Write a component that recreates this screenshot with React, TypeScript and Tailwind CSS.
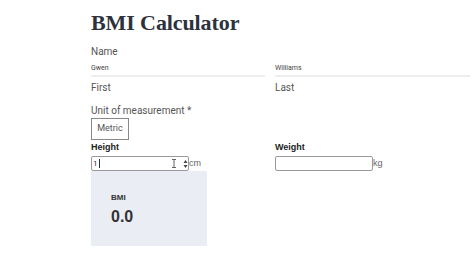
import React from "react";

export default function App() {
  return (
    <div className="w-[474px] h-[255px] bg-white overflow-hidden font-['Roboto','Liberation_Sans',sans-serif] text-[#444]">
      <div className="pl-[91px] pr-[4px] pt-[9px]">
        <h1 className="font-['Liberation_Serif',serif] font-bold text-[22px] leading-[28px] tracking-[-0.1px] text-[#2e323d]">
          BMI Calculator
        </h1>
        <div className="mt-[8px] text-[10px] leading-[14px] text-[#555]">Name</div>
        <div className="grid grid-cols-[174px_195px] gap-x-[10px] mt-[2px]">
          <div>
            <div className="text-[7px] leading-[10px] text-[#444] border-b-2 border-[#eeeeee] pb-[2px] pt-[2px]">Gwen</div>
            <div className="text-[10px] leading-[14px] text-[#555] mt-[4px]">First</div>
          </div>
          <div>
            <div className="text-[7px] leading-[10px] text-[#444] border-b-2 border-[#eeeeee] pb-[2px] pt-[2px]">Williams</div>
            <div className="text-[10px] leading-[14px] text-[#555] mt-[4px]">Last</div>
          </div>
        </div>
        <div className="mt-[9px] text-[10px] leading-[14px] text-[#555]">Unit of measurement *</div>
        <div className="mt-0 w-[38px] h-[22px] border border-[#888] flex items-center justify-center text-[9px] text-[#555]">
          Metric
        </div>
        <div className="grid grid-cols-[174px_195px] gap-x-[10px]">
          <div>
            <div className="font-['Liberation_Sans',sans-serif] font-bold text-[9px] leading-[14px] text-[#222]">Height</div>
            <div className="flex items-center mt-[2px]">
              <div className="relative w-[98px] h-[15px] border border-[#999] rounded-[2px] flex items-center pl-[1px] text-[8px] text-[#333]">
                <span>1</span>
                <span className="w-[1px] h-[9px] bg-[#333] ml-[1px]" />
                <svg className="absolute left-[79px] top-[2px]" width="6" height="9" viewBox="0 0 6 9">
                  <path d="M1 0.5h4M3 0.5v8M1 8.5h4" stroke="#555" strokeWidth="0.9" fill="none" />
                </svg>
                <svg className="absolute left-[91px] top-[2px]" width="5" height="10" viewBox="0 0 5 10">
                  <path d="M0.5 4L2.5 1L4.5 4Z" fill="#444" />
                  <path d="M0.5 6L2.5 9L4.5 6Z" fill="#444" />
                </svg>
              </div>
              <span className="font-['Liberation_Sans',sans-serif] text-[9px] text-[#666]">cm</span>
            </div>
          </div>
          <div>
            <div className="font-['Liberation_Sans',sans-serif] font-bold text-[9px] leading-[14px] text-[#222]">Weight</div>
            <div className="flex items-center mt-[2px]">
              <div className="w-[98px] h-[15px] border border-[#999] rounded-[2px]" />
              <span className="font-['Liberation_Sans',sans-serif] text-[9px] text-[#666]">kg</span>
            </div>
          </div>
        </div>
        <div className="w-[116px] h-[75px] bg-[#ebedf5] pl-[20px] pt-[22px]">
          <div className="font-['Liberation_Sans',sans-serif] font-bold text-[8px] leading-[10px] text-[#333]">BMI</div>
          <div className="font-['Liberation_Sans',sans-serif] font-bold text-[16px] leading-[20px] text-[#333] mt-[4px]">0.0</div>
        </div>
      </div>
    </div>
  );
}
